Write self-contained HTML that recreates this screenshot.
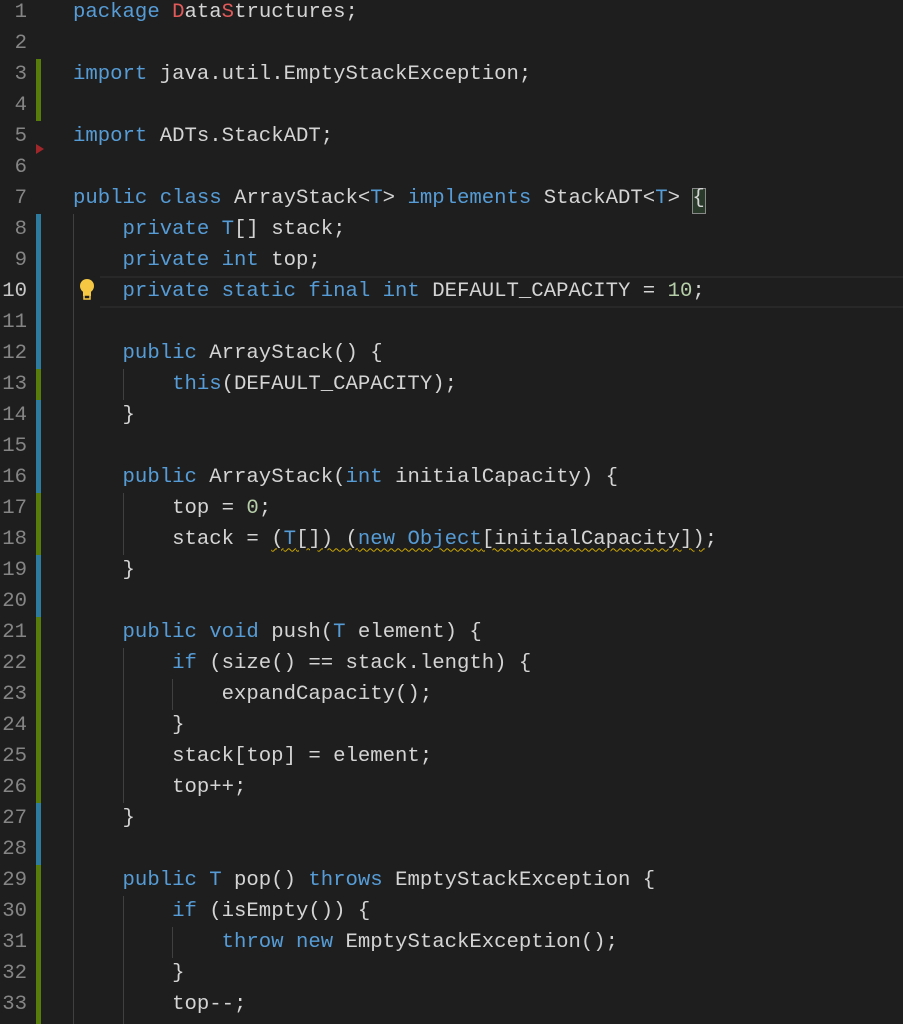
<!DOCTYPE html>
<html><head><style>
body{margin:0;width:903px;height:1024px;background:#1e1e1e;overflow:hidden;position:relative;font-family:"Liberation Mono","DejaVu Sans Mono",monospace;font-size:20.65px;}
.ln{position:absolute;left:0;width:27px;text-align:right;color:#858585;height:31px;line-height:31px;}
.cur{color:#c6c6c6;}
.code{position:absolute;left:73px;color:#d4d4d4;height:31px;line-height:31px;white-space:pre;}
.k{color:#569cd6}.n{color:#b5cea8}.r{color:#e05a5a}
.bar{position:absolute;left:36px;width:5px;}
.g{background:#587c0c}.b{background:#2e7ba0}
.guide{position:absolute;width:1px;background:#404040;}
.sq{text-decoration:underline wavy #cca700;text-underline-offset:4px;text-decoration-thickness:1px;}
</style></head><body>
<div style="position:absolute;left:100px;right:0;top:276px;height:28px;border-top:2px solid #282828;border-bottom:2px solid #282828;"></div>
<div class="bar g" style="top:59px;height:62px"></div>
<div class="bar b" style="top:214px;height:155px"></div>
<div class="bar g" style="top:369px;height:31px"></div>
<div class="bar b" style="top:400px;height:93px"></div>
<div class="bar g" style="top:493px;height:62px"></div>
<div class="bar b" style="top:555px;height:62px"></div>
<div class="bar g" style="top:617px;height:186px"></div>
<div class="bar b" style="top:803px;height:62px"></div>
<div class="bar g" style="top:865px;height:159px"></div>
<div style="position:absolute;left:36px;top:144px;width:0;height:0;border-top:5px solid transparent;border-bottom:5px solid transparent;border-left:8px solid #a1262a"></div>
<div class="guide" style="left:73px;top:214px;height:810px"></div>
<div class="guide" style="left:123px;top:369px;height:31px"></div>
<div class="guide" style="left:123px;top:493px;height:62px"></div>
<div class="guide" style="left:123px;top:648px;height:155px"></div>
<div class="guide" style="left:172px;top:679px;height:31px"></div>
<div class="guide" style="left:123px;top:896px;height:128px"></div>
<div class="guide" style="left:172px;top:927px;height:31px"></div>
<svg style="position:absolute;left:78px;top:278px" width="18" height="24" viewBox="0 0 18 24"><circle cx="9" cy="8" r="7" fill="#f5c742"/><rect x="5" y="12" width="8" height="6" fill="#f5c742"/><rect x="6" y="17" width="6" height="4" fill="#1e1e1e" stroke="#f5c742" stroke-width="1.5"/></svg>
<div style="position:absolute;left:692px;top:188px;width:12px;height:24px;border:1px solid #888;background:#2a3a2a"></div>
<div id="c"></div>
<script>
var L=[
'<span class="k">package</span> <span class="r">D</span>ata<span class="r">S</span>tructures;',
'',
'<span class="k">import</span> java.util.EmptyStackException;',
'',
'<span class="k">import</span> ADTs.StackADT;',
'',
'<span class="k">public class</span> ArrayStack&lt;<span class="k">T</span>&gt; <span class="k">implements</span> StackADT&lt;<span class="k">T</span>&gt; {',
'    <span class="k">private T</span>[] stack;',
'    <span class="k">private int</span> top;',
'    <span class="k">private static final int</span> DEFAULT_CAPACITY = <span class="n">10</span>;',
'',
'    <span class="k">public</span> ArrayStack() {',
'        <span class="k">this</span>(DEFAULT_CAPACITY);',
'    }',
'',
'    <span class="k">public</span> ArrayStack(<span class="k">int</span> initialCapacity) {',
'        top = <span class="n">0</span>;',
'        stack = <span class="sq">(<span class="k">T</span>[]) (<span class="k">new Object</span>[initialCapacity])</span>;',
'    }',
'',
'    <span class="k">public void</span> push(<span class="k">T</span> element) {',
'        <span class="k">if</span> (size() == stack.length) {',
'            expandCapacity();',
'        }',
'        stack[top] = element;',
'        top++;',
'    }',
'',
'    <span class="k">public T</span> pop() <span class="k">throws</span> EmptyStackException {',
'        <span class="k">if</span> (isEmpty()) {',
'            <span class="k">throw new</span> EmptyStackException();',
'        }',
'        top--;'
];
var h='';
for(var i=0;i<L.length;i++){var t=i*31-3.5;
h+='<div class="ln'+(i==9?' cur':'')+'" style="top:'+t+'px">'+(i+1)+'</div>';
h+='<div class="code" style="top:'+t+'px">'+L[i]+'</div>';}
document.getElementById('c').innerHTML=h;
</script>
</body></html>
